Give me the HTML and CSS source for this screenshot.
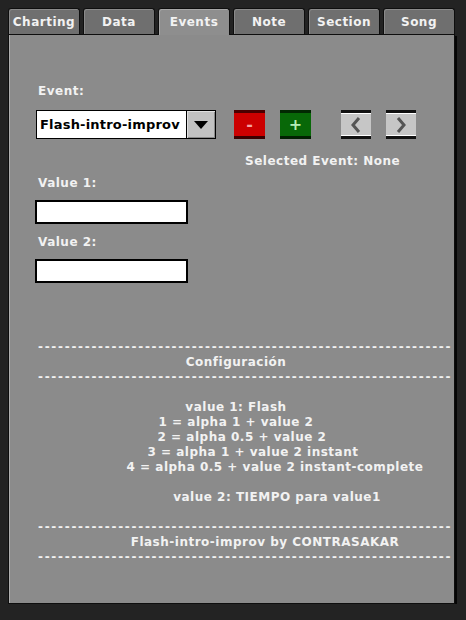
FILE: index.html
```html
<!DOCTYPE html>
<html lang="es">
<head>
    <meta charset="UTF-8">
    <title>Chart Editor - Events</title>
    <link rel="stylesheet" href="styles.css">
</head>
<body>
    <div class="window">
        <div class="tabs">
            <div class="tab">Charting</div>
            <div class="tab">Data</div>
            <div class="tab active">Events</div>
            <div class="tab">Note</div>
            <div class="tab">Section</div>
            <div class="tab">Song</div>
        </div>
        <div class="panel">
            <div class="label first">Event:</div>
            <div class="event-row">
                <div class="dropdown">
                    <div class="dropdown-text">Flash-intro-improv</div>
                    <div class="dropdown-arrow">
                        <svg width="14" height="8" viewBox="0 0 14 8"><polygon points="0,0 14,0 7,8" fill="#000"/></svg>
                    </div>
                </div>
                <button class="btn btn-red">-</button>
                <button class="btn btn-green">+</button>
                <button class="btn btn-gray btn-prev">
                    <svg width="10" height="16" viewBox="0 0 10 16"><polyline points="8,1 2,8 8,15" fill="none" stroke="#555" stroke-width="3"/></svg>
                </button>
                <button class="btn btn-gray">
                    <svg width="10" height="16" viewBox="0 0 10 16"><polyline points="2,1 8,8 2,15" fill="none" stroke="#555" stroke-width="3"/></svg>
                </button>
            </div>
            <div class="selected">Selected Event: None</div>
            <div class="label v1">Value 1:</div>
            <input class="value-input" type="text">
            <div class="label v2">Value 2:</div>
            <input class="value-input" type="text">

            <div class="notes">
                <div class="dashes">--------------------------------------------------------------</div>
                <div class="line">Configuración</div>
                <div class="dashes">--------------------------------------------------------------</div>
                <div class="line">&nbsp;</div>
                <div class="line">value 1: Flash</div>
                <div class="line">1 = alpha 1 + value 2</div>
                <div class="line s1">2 = alpha 0.5 + value 2</div>
                <div class="line s2">3 = alpha 1 + value 2 instant</div>
                <div class="line s3">4 = alpha 0.5 + value 2 instant-complete</div>
                <div class="line">&nbsp;</div>
                <div class="line s4">value 2: TIEMPO para value1</div>
                <div class="line">&nbsp;</div>
                <div class="dashes">--------------------------------------------------------------</div>
                <div class="line s5">Flash-intro-improv by CONTRASAKAR</div>
                <div class="dashes">--------------------------------------------------------------</div>
            </div>
        </div>
    </div>
</body>
</html>
```

FILE: styles.css
```css
body {
    margin: 0;
    padding: 8px 0 0 8px;
    background-color: #232323;
    font-family: "DejaVu Sans", Verdana, sans-serif;
    font-weight: bold;
    font-size: 12px;
    letter-spacing: 0.5px;
    color: #f2f2f2;
}
.window {
    width: 447px;
}
.tabs {
    display: flex;
    gap: 3px;
    align-items: flex-end;
}
.tab {
    flex: 1;
    height: 26px;
    box-sizing: border-box;
    border: 1px solid #0e0e0e;
    border-bottom: none;
    border-radius: 3px 3px 0 0;
    background-color: #6f6f6f;
    box-shadow: inset 1px 1px 0 #8a8a8a;
    text-align: center;
    line-height: 26px;
}
.tab.active {
    background-color: #8e8e8e;
    box-shadow: inset 1px 1px 0 #a8a8a8;
    height: 27px;
    margin-bottom: -1px;
    position: relative;
    z-index: 1;
}
.panel {
    height: 570px;
    box-sizing: border-box;
    border: 1px solid #0e0e0e;
    background-color: #8b8b8b;
    box-shadow: inset 1px 0 0 #b0b0b0, 2px 2px 0 #050505;
    padding-left: 27px;
}
.label {
    line-height: 15px;
    padding-left: 2px;
}
.label.first {
    padding-top: 49px;
}
.event-row {
    display: flex;
    align-items: flex-start;
    margin-top: 11px;
    height: 29px;
}
.dropdown {
    display: flex;
    width: 180px;
    height: 29px;
    box-sizing: border-box;
    border: 1px solid #000;
    background: #fff;
}
.dropdown-text {
    flex: 1;
    color: #000;
    font-size: 13px;
    line-height: 27px;
    padding-left: 3px;
    letter-spacing: 0.2px;
    overflow: hidden;
    white-space: nowrap;
}
.dropdown-arrow {
    width: 28px;
    background: #c2c2c2;
    border-left: 1px solid #000;
    box-shadow: inset 1px 1px 0 #e0e0e0, inset -1px -1px 0 #8a8a8a;
    display: flex;
    align-items: center;
    justify-content: center;
}
.btn {
    width: 31px;
    height: 29px;
    box-sizing: border-box;
    padding: 0;
    border: none;
    font-family: "DejaVu Sans", sans-serif;
    font-weight: bold;
    font-size: 16px;
    line-height: 23px;
    display: flex;
    align-items: center;
    justify-content: center;
}
.btn-red {
    margin-left: 18px;
    background: #cc0000;
    border-top: 3px solid #4a0000;
    border-bottom: 3px solid #3a0000;
    color: #f4a4a4;
}
.btn-green {
    margin-left: 15px;
    background: #086808;
    border-top: 3px solid #022802;
    border-bottom: 3px solid #022002;
    color: #b4eeb4;
}
.btn-gray {
    margin-left: 15px;
    width: 30px;
    background: #c6c6c6;
    border-top: 3px solid #111;
    border-bottom: 3px solid #111;
    box-shadow: inset 0 1px 0 #fff, inset 0 -1px 0 #fff;
}
.btn-prev {
    margin-left: 30px;
}
.selected {
    margin-top: 15px;
    margin-left: 209px;
    line-height: 15px;
}
.label.v1 {
    margin-top: 7px;
}
.label.v2 {
    margin-top: 11px;
}
.value-input {
    display: block;
    width: 153px;
    height: 24px;
    box-sizing: border-box;
    margin: 9px 0 0 -1px;
    border: 2px solid #000;
    background: #fff;
    padding: 0;
}
.notes {
    margin-top: 57px;
    margin-left: 2px;
    width: 414px;
    line-height: 15px;
}
.dashes {
    white-space: nowrap;
    overflow: hidden;
    letter-spacing: 1.7px;
}
.line {
    text-align: center;
    margin-right: 18px;
    white-space: nowrap;
}
.s1 { padding-left: 12px; }
.s2 { padding-left: 34px; }
.s3 { padding-left: 78px; }
.s4 { padding-left: 82px; }
.s5 { padding-left: 58px; }
```
